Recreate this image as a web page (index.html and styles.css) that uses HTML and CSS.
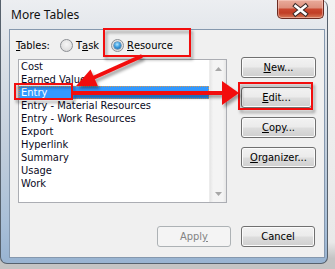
FILE: index.html
```html
<!DOCTYPE html>
<html>
<head>
<meta charset="utf-8">
<link rel="stylesheet" href="styles.css">
</head>
<body>
<div class="window">
  <div class="titlebar">
    <span class="title">More Tables</span>
    <span class="close">
      <svg width="47" height="19" viewBox="0 0 47 19">
        <path d="M18.5 6 L28.5 14 M28.5 6 L18.5 14" stroke="#3a2a28" stroke-width="4.6" stroke-linecap="square" fill="none"/>
        <path d="M18.5 6 L28.5 14 M28.5 6 L18.5 14" stroke="#ffffff" stroke-width="2.6" stroke-linecap="square" fill="none"/>
      </svg>
    </span>
  </div>
  <div class="client">
    <div class="header">
      <span class="label"><u>T</u>ables:</span>
      <span class="radio task"><span class="dot"></span>T<u>a</u>sk</span>
      <span class="radio checked"><span class="dot"></span><u>R</u>esource</span>
    </div>
    <div class="main">
      <div class="list">
        <ul class="items">
          <li>Cost</li>
          <li>Earned Value</li>
          <li class="selected">Entry</li>
          <li>Entry - Material Resources</li>
          <li>Entry - Work Resources</li>
          <li>Export</li>
          <li>Hyperlink</li>
          <li>Summary</li>
          <li>Usage</li>
          <li>Work</li>
        </ul>
        <div class="scrollbar">
          <span class="sbtn"><svg width="7" height="4" viewBox="0 0 7 4"><polygon points="0,4 3.5,0 7,4" fill="#a7a7a7"/></svg></span>
          <span class="sbtn"><svg width="7" height="4" viewBox="0 0 7 4"><polygon points="0,0 7,0 3.5,4" fill="#a7a7a7"/></svg></span>
        </div>
      </div>
      <div class="buttons">
        <button class="btn"><u>N</u>ew...</button>
        <button class="btn edit"><u>E</u>dit...</button>
        <button class="btn"><u>C</u>opy...</button>
        <button class="btn"><u>O</u>rganizer...</button>
      </div>
    </div>
    <div class="footer">
      <button class="btn small disabled">Appl<u>y</u></button>
      <button class="btn small">Cancel</button>
    </div>
  </div>
</div>
<svg class="annot" width="335" height="269" viewBox="0 0 335 269">
  <defs>
    <filter id="sh" x="-30%" y="-30%" width="160%" height="160%">
      <feDropShadow dx="2" dy="3" stdDeviation="1.6" flood-color="#000" flood-opacity="0.35"/>
    </filter>
  </defs>
  <g filter="url(#sh)" fill="none" stroke="#f20d0d" stroke-width="2">
    <rect x="104" y="29" width="86" height="27"/>
    <rect x="15" y="84" width="57" height="15"/>
    <rect x="239" y="83" width="73" height="26"/>
  </g>
  <g filter="url(#sh)" fill="#f20d0d">
    <line x1="142" y1="56" x2="93" y2="78" stroke="#f20d0d" stroke-width="4"/>
    <polygon points="76,86 90.5,69.5 97.9,85.9"/>
    <rect x="72" y="91" width="152" height="4"/>
    <polygon points="222,81 239,93 222,105"/>
  </g>
</svg>
</body>
</html>
```
FILE: styles.css
```css
* { box-sizing: border-box; }
html, body { margin: 0; padding: 0; }
body {
  width: 335px;
  height: 269px;
  overflow: hidden;
  position: relative;
  background: linear-gradient(#f2f2f2 0%, #e9e9e9 90%, #c4c4c4 96%, #c4c4c4 100%);
  font-family: "DejaVu Sans Condensed", "DejaVu Sans", sans-serif;
  font-stretch: condensed;
  font-size: 11px;
  color: #000;
}
.window {
  width: 328px;
  height: 264px;
  border: 1px solid #56616d;
  border-top: 0;
  border-radius: 0 7px 7px 7px;
  background: linear-gradient(#eceef1 0%, #dde2e8 20%, #c3cfdc 55%, #a8bfd8 85%, #98b3d1 100%);
  padding: 0 2px 0 8px;
  display: flex;
  flex-direction: column;
}
.titlebar {
  height: 29px;
  display: flex;
  justify-content: space-between;
  align-items: flex-start;
}
.title {
  font-family: "Noto Sans", sans-serif;
  font-stretch: normal;
  font-size: 12px;
  line-height: 29px;
  padding-left: 2px;
  color: #101010;
}
.close {
  width: 47px;
  height: 19px;
  margin-right: 1px;
  border: 1px solid #6a2b22;
  border-top: 0;
  border-radius: 0 0 5px 5px;
  background: linear-gradient(#e9ab9b 0%, #de917e 42%, #c9472f 52%, #c13d25 72%, #d67a58 100%);
  box-shadow: inset 0 0 0 1px rgba(255, 220, 210, 0.45);
  display: flex;
  position: relative;
}
.close svg { position: absolute; left: -1px; top: 0; }
.client {
  height: 229px;
  border: 1px solid #8598ae;
  background: #f0f0f0;
  padding: 0 8px 0 6px;
  display: flex;
  flex-direction: column;
}
.header {
  height: 27px;
  padding-top: 3px;
  display: flex;
  align-items: center;
}
.label { width: 44px; }
.radio {
  display: flex;
  align-items: center;
}
.radio.task { width: 51px; }
.dot {
  width: 13px;
  height: 13px;
  border-radius: 50%;
  border: 1px solid #8c8f94;
  background: radial-gradient(circle at 50% 40%, #f6f6f6 0%, #e4e4e4 55%, #d0d0d0 100%);
  margin-right: 3px;
  position: relative;
}
.radio.checked .dot::after {
  content: "";
  position: absolute;
  left: 2px;
  top: 2px;
  width: 7px;
  height: 7px;
  border-radius: 50%;
  background: radial-gradient(circle at 45% 35%, #b5e6ff 0%, #3c9ee0 45%, #15579a 100%);
  box-shadow: 0 0 0 0.5px #2a5f8f;
}
.main {
  display: flex;
  padding-left: 2px;
  height: 146px;
}
.list {
  width: 209px;
  height: 144px;
  margin-top: 2px;
  border: 1px solid #abadb3;
  background: #fff;
  display: flex;
}
.items {
  list-style: none;
  margin: 0;
  padding: 0;
  flex: 1;
}
.items li {
  height: 13px;
  line-height: 13px;
  padding-left: 2px;
  white-space: nowrap;
  color: #0a0a1e;
}
.items li.selected {
  background: #3399ff;
  color: #fff;
  outline: 1px dotted #d89a50;
  outline-offset: -1px;
}
.scrollbar {
  width: 17px;
  background: linear-gradient(90deg, #e6e6e6 0%, #f4f4f4 20%, #f4f4f4 80%, #e6e6e6 100%);
  border-left: 1px solid #ececec;
  display: flex;
  flex-direction: column;
  justify-content: space-between;
}
.sbtn {
  height: 17px;
  display: flex;
  align-items: center;
  justify-content: center;
}
.buttons {
  margin-left: 14px;
  display: flex;
  flex-direction: column;
  gap: 9px;
}
.btn {
  width: 75px;
  height: 21px;
  padding: 0;
  border: 1px solid #707070;
  border-radius: 3px;
  background: linear-gradient(#f2f2f2 0%, #ebebeb 48%, #dddddd 52%, #cfcfcf 100%);
  box-shadow: inset 0 0 0 1px #fbfbfb;
  font-family: inherit;
  font-stretch: condensed;
  font-size: 11px;
  color: #000;
  text-align: center;
}
.btn.edit { width: 71px; }
.btn.small { width: 74px; }
.btn.disabled {
  border-color: #adb2b5;
  background: #f4f4f4;
  box-shadow: none;
  color: #838383;
}
.footer {
  margin-top: 23px;
  display: flex;
  justify-content: flex-end;
  gap: 10px;
  padding-right: 1px;
}
.annot {
  position: absolute;
  left: 0;
  top: 0;
  pointer-events: none;
}
```
